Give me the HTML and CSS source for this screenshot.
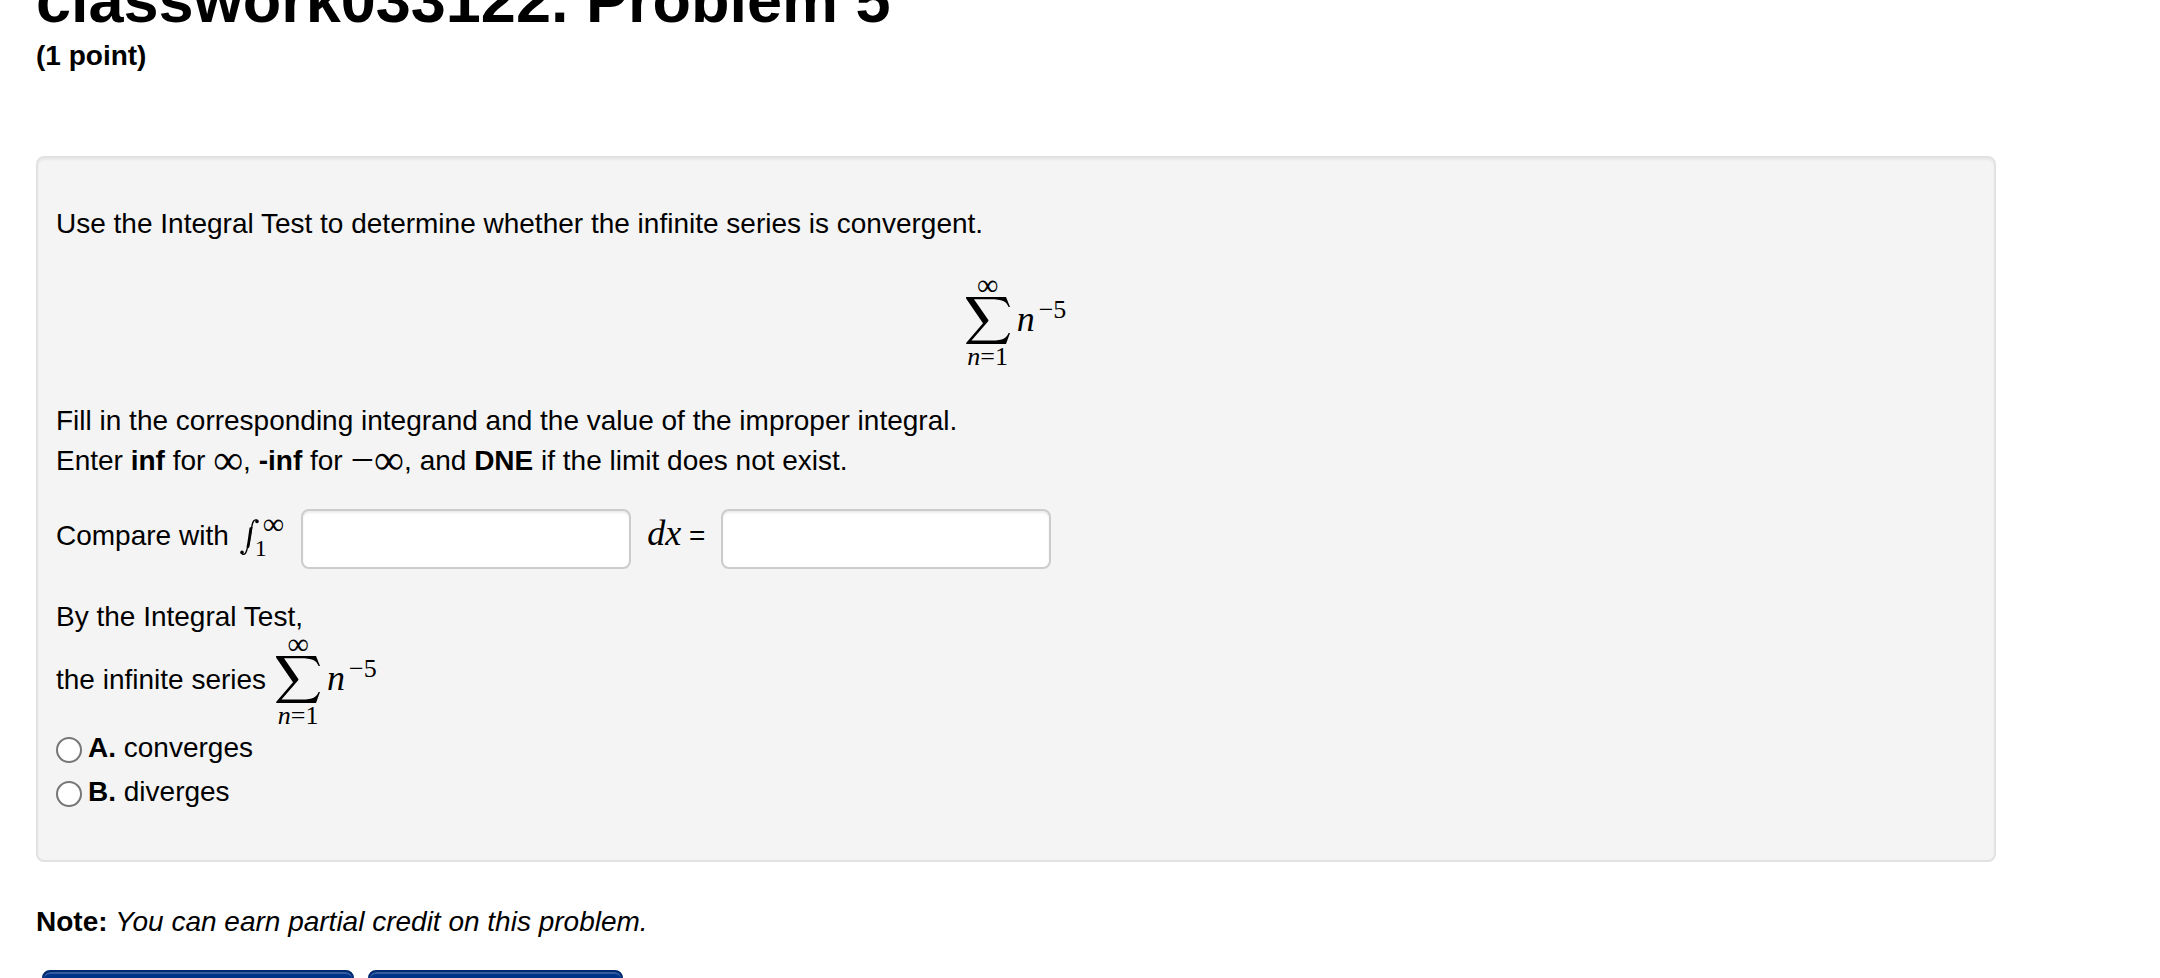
FILE: index.html
```
<!DOCTYPE html>
<html lang="en">
<head>
  <meta charset="UTF-8">
  <meta name="viewport" content="width=device-width, initial-scale=1.0">
  <title>classwork033122. Problem 5</title>
  <link rel="stylesheet" href="styles.css">
</head>
<body>

  <!-- summation sign, used twice -->
  <svg class="defs" aria-hidden="true">
    <symbol id="sigma" viewBox="0 0 44 47">
      <path d="M0 0H40L44 10H42.6C40 4 37 2.2 24 2.2H8L22 22.6C22.6 23.4 22.6 23.8 22 24.4L5.5 43.6H26C37 43.6 40.6 41 42.6 36H44L40 47H1C0 47 0 46.2 .5 45.4L17 26.2L.4 2C0 1.2 0 .8 0 0Z"/>
    </symbol>
  </svg>

  <main class="page">
    <h1 class="title">classwork033122. Problem 5</h1>
    <div class="points">(1 point)</div>

    <form id="problem">
      <div class="problem">
        <p>Use the Integral Test to determine whether the infinite series is convergent.</p>

        <div class="display">
          <span class="series">
            <span class="sum">
              <span class="limit inf">∞</span>
              <svg class="sigma" role="img" aria-label="sum"><use href="#sigma"/></svg>
              <span class="limit"><i>n</i>=1</span>
            </span>
            <span class="term"><i>n</i><sup>−5</sup></span>
          </span>
        </div>

        <p>
          Fill in the corresponding integrand and the value of the improper integral.<br>
          Enter <b>inf</b> for <span class="math">∞</span>, <b>-inf</b> for <span class="math">−∞</span>, and <b>DNE</b> if the limit does not exist.
        </p>

        <div class="compare">
          <label for="integrand">Compare with</label>
          <span class="integral">
            <svg class="int" viewBox="0 0 19 38" role="img" aria-label="integral">
              <path d="M2 35.6C5 38 6.6 34.5 7.6 28.5L8.4 29L11.6 9.5C12.4 4 14 .8 17 2.2" fill="none" stroke="#000" stroke-width="1.4"/>
              <path d="M6.6 29C8 22 8.6 15 9.6 9.5L12.6 9C11.6 15 10.6 23 9.2 29Z"/>
              <circle cx="2" cy="34.4" r="1.8"/>
              <circle cx="17" cy="3.4" r="1.8"/>
            </svg>
            <span class="bounds"><span class="upper">∞</span><span>1</span></span>
          </span>
          <input type="text" id="integrand" class="answer">
          <label for="value"><i class="dx">dx</i> =</label>
          <input type="text" id="value" class="answer">
        </div>

        <p>By the Integral Test,</p>
        <div class="conclusion">
          <span>the infinite series</span>
          <span class="series">
            <span class="sum">
              <span class="limit inf">∞</span>
              <svg class="sigma" role="img" aria-label="sum"><use href="#sigma"/></svg>
              <span class="limit"><i>n</i>=1</span>
            </span>
            <span class="term"><i>n</i><sup>−5</sup></span>
          </span>
        </div>

        <label class="choice"><input type="radio" name="test" value="A"><span><b>A.</b> converges</span></label>
        <label class="choice"><input type="radio" name="test" value="B"><span><b>B.</b> diverges</span></label>
      </div>

      <p class="note"><b>Note:</b> <i>You can earn partial credit on this problem.</i></p>

      <div class="buttons">
        <button type="button">Preview My Answers</button>
        <button type="submit">Submit Answers</button>
      </div>
    </form>
  </main>

</body>
</html>
```
FILE: styles.css
```
body {
  margin: 0;
  height: 100vh;
  overflow: hidden;
  background: #fff;
  color: #000;
  font-family: "Liberation Sans", Helvetica, Arial, sans-serif;
  font-size: 28px;
  line-height: 40px;
}
.defs {
  display: none;
}
.page {
  padding: 0 36px;
}
.title {
  margin: -32px 0 4px;
  font-size: 63px;
  line-height: 64px;
}
.points {
  font-weight: bold;
}
p {
  margin: 0;
}
.problem {
  margin: 80px 128px 0 0;
  padding: 46px 18px;
  background: #f4f4f4;
  border: 2px solid #e2e2e2;
  border-radius: 8px;
  box-shadow: inset 0 2px 2px rgba(0, 0, 0, 0.05);
}

/* math */
.math, .dx, .series, .integral {
  font-family: "Liberation Serif", "Times New Roman", serif;
}
.math {
  font-size: 42px;
  line-height: 28px;
  vertical-align: -4px;
}
.dx {
  font-size: 36px;
  line-height: 30px;
}
.display {
  display: flex;
  justify-content: center;
  margin: 30px 0 34px;
}
.series {
  display: flex;
  align-items: center;
  gap: 7px;
}
.sum {
  display: flex;
  flex-direction: column;
  align-items: center;
  gap: 2px;
}
.limit {
  font-size: 26px;
  line-height: 21px;
}
.inf {
  font-size: 30px;
}
.sigma {
  display: block;
  width: 44px;
  height: 47px;
}
.term {
  display: flex;
  gap: 4px;
  padding-bottom: 4px;
  font-size: 36px;
  line-height: 34px;
}
.term sup {
  font-size: 26px;
  line-height: 24px;
  margin-top: -4px;
}
.integral {
  display: flex;
  align-items: center;
  margin: 0 17px 0 11px;
}
.int {
  width: 19px;
  height: 38px;
}
.bounds {
  display: flex;
  flex-direction: column;
  margin-left: -4px;
  padding-bottom: 2px;
  font-size: 24px;
  line-height: 24px;
}
.upper {
  padding-left: 8px;
  font-size: 30px;
}

.compare {
  display: flex;
  align-items: center;
  margin: 24px 0 28px;
}
.compare label {
  padding-bottom: 2px;
}
.answer {
  width: 330px;
  height: 60px;
  margin: 4px 16px 0 0;
  padding: 8px 12px;
  box-sizing: border-box;
  font: inherit;
  background: #fff;
  border: 2px solid #ccc;
  border-radius: 8px;
  box-shadow: inset 0 2px 2px rgba(0, 0, 0, 0.075);
}
.compare label + .answer {
  margin-left: 16px;
}
.conclusion {
  display: flex;
  align-items: center;
  gap: 10px;
  margin: -4px 0 0;
}
.choice {
  display: flex;
  align-items: center;
  gap: 6px;
  line-height: 44px;
}
.choice input {
  appearance: none;
  box-sizing: border-box;
  width: 26px;
  height: 26px;
  margin: 4px 0 0;
  background: #fff;
  border: 2px solid #767676;
  border-radius: 50%;
}

.note {
  margin-top: 40px;
}
.buttons {
  display: flex;
  gap: 14px;
  margin: 28px 6px;
}
button {
  padding: 8px 25px;
  font: inherit;
  color: #fff;
  background: #038;
  border: 2px solid #002a70;
  border-radius: 8px;
  box-shadow: inset 0 2px 0 rgba(255, 255, 255, 0.2);
}
```
